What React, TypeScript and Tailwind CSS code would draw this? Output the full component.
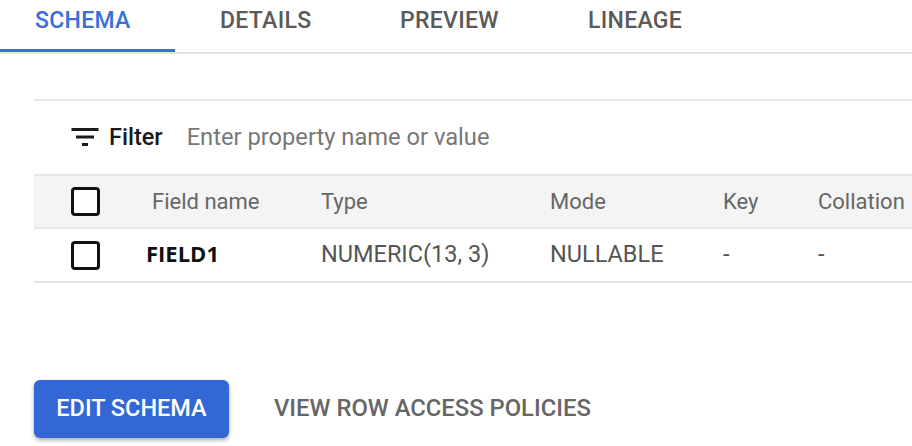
import React from "react";

const tabs = [
  { t: "SCHEMA", cls: "w-[175px] pl-[35px]" },
  { t: "DETAILS", cls: "w-[180px] pl-[45px]" },
  { t: "PREVIEW", cls: "w-[188px] pl-[45px]" },
  { t: "LINEAGE", cls: "pl-[45px]" },
];

function Box() {
  return <div className="w-[29px] h-[29px] border-[3px] border-[#111] rounded-[4px] bg-white" />;
}

export default function App() {
  return (
    <div className="w-[912px] h-[446px] overflow-hidden bg-white" style={{ fontFamily: "Roboto, 'Liberation Sans', sans-serif" }}>
      <div className="flex h-[54px] border-b-2 border-[#e3e3e3]">
        {tabs.map((tab, i) => (
          <div
            key={tab.t}
            className={
              "relative flex items-center whitespace-nowrap text-[23px] font-medium tracking-[0.3px] " +
              tab.cls +
              (i === 0 ? " text-[#3a6fd8]" : " text-[#5a5a5a]")
            }
          >
            <span className="-mt-[10px]">{tab.t}</span>
            {i === 0 && <div className="absolute left-0 right-0 bottom-[0px] h-[3px] bg-[#3a6fd8]" />}
          </div>
        ))}
      </div>
      <div className="pl-[34px] pt-[45px]">
        <div className="border-t-2 border-[#e6e6e6] h-[75px] flex items-center pl-[33px]">
          <svg width="36" height="36" viewBox="0 0 24 24" className="-mt-[1px]">
            <path d="M10 18h4v-2h-4v2zM3 6v2h18V6H3zm3 7h12v-2H6v2z" fill="#1a1a1a" />
          </svg>
          <span className="ml-[6px] mt-[1px] text-[23.5px] font-medium text-[#1a1a1a]">Filter</span>
          <span className="ml-[24px] mt-[1px] text-[23.7px] text-[#777]">Enter property name or value</span>
        </div>
        <div className="border-t-2 border-[#e6e6e6] bg-[#f4f4f4] h-[53px] flex items-center text-[22px] text-[#666] whitespace-nowrap">
          <div className="w-[112px] pl-[37px] shrink-0"><Box /></div>
          <div className="w-[175px] pl-[6px] shrink-0">Field name</div>
          <div className="w-[229px] shrink-0">Type</div>
          <div className="w-[173px] shrink-0">Mode</div>
          <div className="w-[95px] shrink-0">Key</div>
          <div className="whitespace-nowrap">Collation</div>
        </div>
        <div className="border-t-2 border-b-2 border-[#e6e6e6] h-[56px] flex items-center text-[23.5px] text-[#555] whitespace-nowrap">
          <div className="w-[112px] pl-[37px] shrink-0"><Box /></div>
          <div className="w-[175px] shrink-0 -mt-[3px] font-bold text-[#111] text-[22px]" style={{ fontFamily: "'Open Sans', sans-serif" }}>FIELD1</div>
          <div className="w-[229px] shrink-0">NUMERIC(13, 3)</div>
          <div className="w-[173px] shrink-0">NULLABLE</div>
          <div className="w-[95px] shrink-0">-</div>
          <div>-</div>
        </div>
        <div className="mt-[97px] flex items-center">
          <button className="h-[58px] w-[195px] rounded-[6px] bg-[#3367d6] text-white text-[23.5px] font-medium shadow-[0_2px_4px_rgba(0,0,0,0.35)] whitespace-nowrap">
            EDIT SCHEMA
          </button>
          <span className="ml-[45px] text-[23.8px] font-medium text-[#666] whitespace-nowrap">VIEW ROW ACCESS POLICIES</span>
        </div>
      </div>
    </div>
  );
}
